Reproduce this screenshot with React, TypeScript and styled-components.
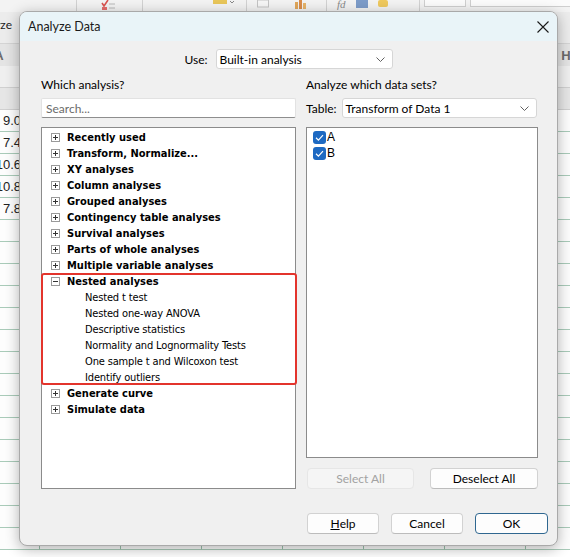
import React from "react";
import styled, { createGlobalStyle } from "styled-components";

const GlobalStyle = createGlobalStyle`
  html, body {
    margin: 0;
    padding: 0;
  }
  body {
    width: 570px;
    height: 557px;
    overflow: hidden;
    background: #ffffff;
    font-family: "Liberation Sans", Arial, sans-serif;
  }
`;

const tableColumns = ["A", "B", "C", "D", "E", "F", "G", "H"];
const columnA = ["9.0", "7.4", "10.6", "10.8", "7.8"];

const topLevel = [
  "Recently used",
  "Transform, Normalize...",
  "XY analyses",
  "Column analyses",
  "Grouped analyses",
  "Contingency table analyses",
  "Survival analyses",
  "Parts of whole analyses",
  "Multiple variable analyses",
];

const nested = [
  "Nested t test",
  "Nested one-way ANOVA",
  "Descriptive statistics",
  "Normality and Lognormality Tests",
  "One sample t and Wilcoxon test",
  "Identify outliers",
];

function ExpandIcon({ open }: { open?: boolean }) {
  return (
    <svg width="9" height="9" viewBox="0 0 9 9">
      <rect x="0.5" y="0.5" width="8" height="8" fill="#fff" stroke="#9a9a9a" />
      <line x1="2" y1="4.5" x2="7" y2="4.5" stroke="#333" />
      {!open && <line x1="4.5" y1="2" x2="4.5" y2="7" stroke="#333" />}
    </svg>
  );
}

function Chevron() {
  return (
    <svg width="9" height="5" viewBox="0 0 9 5">
      <path d="M0.5 0.5 L4.5 4.5 L8.5 0.5" fill="none" stroke="#606060" strokeWidth="1" />
    </svg>
  );
}

function CheckBox() {
  return (
    <CheckSquare>
      <svg width="13" height="13" viewBox="0 0 13 13">
        <path d="M3 6.8 L5.4 9.1 L10 4.2" fill="none" stroke="#fff" strokeWidth="1.2" />
      </svg>
    </CheckSquare>
  );
}

export default function App(): React.ReactElement {
  return (
    <Screen>
      <GlobalStyle />
      <Toolbar>
        <IconRow>
          <ToolGroup width={77} />
          <ToolGroup width={66} pad={24}>
            <svg width="14" height="11" viewBox="0 0 14 11">
              <path d="M1 3 L3 6 L7 0" fill="none" stroke="#d9534f" strokeWidth="1.6" />
              <rect x="1" y="7" width="5" height="3" fill="#e56b6b" />
              <line x1="8" y1="4" x2="14" y2="4" stroke="#b8b8b8" />
              <line x1="8" y1="8" x2="14" y2="8" stroke="#b8b8b8" />
            </svg>
          </ToolGroup>
          <ToolGroup width={104} pad={70}>
            <svg width="22" height="6" viewBox="0 0 22 6">
              <rect x="0" y="0" width="14" height="4" fill="#e8c65a" />
              <path d="M17 1 L19 3 L21 1" fill="none" stroke="#888" />
            </svg>
          </ToolGroup>
          <ToolGroup width={80} pad={10} gap={26}>
            <svg width="12" height="8" viewBox="0 0 12 8">
              <rect x="0.5" y="0" width="11" height="7" fill="#f6f6f6" stroke="#c4c4c4" />
            </svg>
            <svg width="14" height="9" viewBox="0 0 14 9">
              <rect x="0" y="2" width="3" height="7" fill="#e0a65a" />
              <rect x="4" y="0" width="3" height="9" fill="#d98c4a" />
              <rect x="8" y="3" width="3" height="6" fill="#e6b36a" />
            </svg>
          </ToolGroup>
          <ToolGroup width={93} pad={10} gap={10}>
            <ToolText>fd</ToolText>
            <svg width="12" height="8" viewBox="0 0 12 8">
              <rect x="0" y="0" width="12" height="8" fill="#7d9cc9" />
            </svg>
            <svg width="10" height="8" viewBox="0 0 10 8">
              <rect x="0" y="0" width="10" height="7" rx="2" fill="#efc95e" />
            </svg>
          </ToolGroup>
          <ToolBox width={40} />
          <ToolBox width={110} />
        </IconRow>
        <RibbonRow>
          <RibbonLabel>Analyze</RibbonLabel>
        </RibbonRow>
      </Toolbar>

      <Sheet>
        {tableColumns.map((c) => (
          <HeaderCell key={c}>{c}</HeaderCell>
        ))}
        {Array.from({ length: 22 }).map((_, r) =>
          tableColumns.map((c, ci) => (
            <Cell key={`${r}-${c}`} shade={r === 0 ? 1 : r === 1 ? 2 : 0}>
              {ci === 0 && r >= 2 && r < 2 + columnA.length ? columnA[r - 2] : ""}
            </Cell>
          ))
        )}
      </Sheet>

      <Dialog>
        <TitleBar>
          <TitleText>Analyze Data</TitleText>
          <CloseButton>
            <svg width="12" height="12" viewBox="0 0 12 12">
              <path d="M0.5 0.5 L11.5 11.5 M11.5 0.5 L0.5 11.5" stroke="#1a1a1a" strokeWidth="1.1" />
            </svg>
          </CloseButton>
        </TitleBar>

        <UseRow>
          <span>Use:</span>
          <Select width={177}>
            <span>Built-in analysis</span>
            <Chevron />
          </Select>
        </UseRow>

        <Columns>
          <Column>
            <Label>Which analysis?</Label>
            <SearchBox>Search...</SearchBox>
            <TreeBox>
              {topLevel.map((t) => (
                <TreeRow key={t}>
                  <ExpandIcon />
                  <TreeBold>{t}</TreeBold>
                </TreeRow>
              ))}
              <Highlight>
                <TreeRow>
                  <ExpandIcon open />
                  <TreeBold>Nested analyses</TreeBold>
                </TreeRow>
                {nested.map((n) => (
                  <TreeRow key={n} child>
                    <TreeText>{n}</TreeText>
                  </TreeRow>
                ))}
              </Highlight>
              <TreeRow>
                <ExpandIcon />
                <TreeBold>Generate curve</TreeBold>
              </TreeRow>
              <TreeRow>
                <ExpandIcon />
                <TreeBold>Simulate data</TreeBold>
              </TreeRow>
            </TreeBox>
          </Column>

          <Column>
            <Label>Analyze which data sets?</Label>
            <TableRow>
              <span>Table:</span>
              <Select>
                <span>Transform of Data 1</span>
                <Chevron />
              </Select>
            </TableRow>
            <DataBox>
              {["A", "B"].map((d) => (
                <DataRow key={d}>
                  <CheckBox />
                  <DataLabel>{d}</DataLabel>
                </DataRow>
              ))}
            </DataBox>
            <SelectRow>
              <Button width={107} disabled>
                Select All
              </Button>
              <Button width={108}>Deselect All</Button>
            </SelectRow>
          </Column>
        </Columns>

        <Footer>
          <Button width={72}>
            <u>H</u>elp
          </Button>
          <Button width={72}>Cancel</Button>
          <Button width={73} primary>
            OK
          </Button>
        </Footer>
      </Dialog>
    </Screen>
  );
}

const Screen = styled.div`
  position: relative;
  width: 570px;
  height: 557px;
  overflow: hidden;
  background: #ffffff;
`;

const Toolbar = styled.div`
  display: flex;
  flex-direction: column;
  height: 44px;
  background: #f3f3f3;
  border-bottom: 1px solid #d4d4d4;
  box-sizing: border-box;
`;

const IconRow = styled.div`
  display: flex;
  height: 12px;
  align-items: stretch;
`;

const ToolGroup = styled.div<{ width: number; pad?: number; gap?: number }>`
  width: ${(p) => p.width}px;
  flex: none;
  box-sizing: border-box;
  display: flex;
  align-items: flex-start;
  gap: ${(p) => p.gap ?? 0}px;
  padding-left: ${(p) => p.pad ?? 0}px;
  border-right: 1px solid #d2d2d2;
`;

const ToolText = styled.span`
  font-family: "Liberation Serif", serif;
  font-size: 11px;
  line-height: 9px;
  color: #8a8a8a;
  font-style: italic;
`;

const ToolBox = styled.div<{ width: number }>`
  width: ${(p) => p.width}px;
  flex: none;
  height: 6px;
  margin-left: 4px;
  background: #fbfbfb;
  border: 1px solid #cfcfcf;
  border-top: none;
`;

const RibbonRow = styled.div`
  flex: 1;
  display: flex;
  align-items: flex-start;
  padding-top: 5px;
  background: #ececec;
`;

const RibbonLabel = styled.div`
  width: 12px;
  display: flex;
  justify-content: flex-end;
  white-space: nowrap;
  font-family: Lato, "Liberation Sans", sans-serif;
  font-size: 12px;
  color: #222;
`;

const Sheet = styled.div`
  display: grid;
  grid-template-columns: repeat(8, 81px);
  grid-auto-rows: 22px;
  margin-left: -41px;
  font-family: "Liberation Sans", Arial, sans-serif;
  font-size: 13px;
`;

const HeaderCell = styled.div`
  height: 23px;
  box-sizing: border-box;
  display: flex;
  align-items: center;
  justify-content: center;
  background: #e4e4e4;
  border-right: 1px solid #cdcdcd;
  border-bottom: 1px solid #c6c6c6;
  color: #6a6a6a;
  font-weight: bold;
  font-size: 13px;
`;

const Cell = styled.div<{ shade: number }>`
  box-sizing: border-box;
  display: flex;
  align-items: center;
  justify-content: flex-end;
  padding-right: 18px;
  background: ${(p) => (p.shade === 1 ? "#efefef" : p.shade === 2 ? "#e6e6e6" : "#fdfdfd")};
  border-right: 1px solid #9cc1ad;
  border-bottom: 1px solid ${(p) => (p.shade ? "#d0d0d0" : "#a9cbb9")};
  color: #222;
`;

const Dialog = styled.div`
  position: absolute;
  left: 19px;
  top: 11px;
  width: 539px;
  height: 535px;
  box-sizing: border-box;
  display: flex;
  flex-direction: column;
  background: #f0f0f0;
  border: 1px solid #a9a9a9;
  border-radius: 8px;
  overflow: hidden;
  box-shadow: 0 3px 14px rgba(0, 0, 0, 0.3);
  font-family: Lato, "Liberation Sans", sans-serif;
  font-size: 12px;
  color: #000;
`;

const TitleBar = styled.div`
  height: 29px;
  flex: none;
  display: flex;
  align-items: center;
  justify-content: space-between;
  padding: 0 8px 0 8px;
  background: #e9f4f8;
`;

const TitleText = styled.span`
  font-size: 12.5px;
  color: #1a1a1a;
`;

const CloseButton = styled.div`
  width: 12px;
  height: 12px;
  display: flex;
`;

const UseRow = styled.div`
  margin-top: 8px;
  height: 20px;
  display: flex;
  align-items: center;
  justify-content: center;
  gap: 8px;
`;

const Select = styled.div<{ width?: number }>`
  height: 20px;
  box-sizing: border-box;
  ${(p) => (p.width ? `width: ${p.width}px;` : "flex: 1;")}
  display: flex;
  align-items: center;
  justify-content: space-between;
  padding: 0 7px 0 3px;
  background: #ffffff;
  border: 1px solid #d6d6d6;
  border-radius: 3px;
`;

const Columns = styled.div`
  margin-top: 9px;
  height: 411px;
  display: grid;
  grid-template-columns: 255px 232px;
  column-gap: 10px;
  padding: 0 19px 0 21px;
`;

const Column = styled.div`
  display: flex;
  flex-direction: column;
  min-height: 0;
`;

const Label = styled.div`
  height: 14px;
  line-height: 14px;
`;

const SearchBox = styled.div`
  margin-top: 6px;
  height: 20px;
  box-sizing: border-box;
  display: flex;
  align-items: center;
  padding-left: 4px;
  background: #ffffff;
  border: 1px solid #e2e2e2;
  border-bottom: 1px solid #8e8e8e;
  border-radius: 2px;
  color: #6b6b6b;
`;

const TreeBox = styled.div`
  margin-top: 9px;
  flex: 1;
  box-sizing: border-box;
  padding-top: 1px;
  background: #ffffff;
  border: 1px solid #8b8b8b;
  font-family: "DejaVu Sans Condensed", "DejaVu Sans", sans-serif;
  font-size: 11px;
`;

const TreeRow = styled.div<{ child?: boolean }>`
  height: 16px;
  display: flex;
  align-items: center;
  gap: 7px;
  padding-left: ${(p) => (p.child ? 43 : 9)}px;
`;

const TreeBold = styled.span`
  font-weight: bold;
  color: #000;
`;

const TreeText = styled.span`
  color: #000;
  letter-spacing: -0.15px;
`;

const Highlight = styled.div`
  margin: 0 -2px 0 -1px;
  padding-left: 1px;
  outline: 2px solid #e3342c;
  outline-offset: -2px;
  border-radius: 3px;
`;

const TableRow = styled.div`
  margin-top: 6px;
  height: 20px;
  display: flex;
  align-items: center;
  gap: 5px;
  margin-right: 1px;
`;

const DataBox = styled.div`
  margin-top: 9px;
  flex: 1;
  box-sizing: border-box;
  padding: 3px 6px;
  background: #ffffff;
  border: 1px solid #8b8b8b;
`;

const DataRow = styled.div`
  height: 16px;
  display: flex;
  align-items: flex-start;
  gap: 1px;
`;

const CheckSquare = styled.span`
  width: 13px;
  height: 13px;
  display: flex;
  background: #1d69c2;
  border-radius: 3px;
`;

const DataLabel = styled.span`
  font-family: "Liberation Sans", Arial, sans-serif;
  font-size: 12px;
  line-height: 13px;
`;

const SelectRow = styled.div`
  margin-top: 10px;
  display: flex;
  justify-content: space-between;
  padding-left: 1px;
`;

const Button = styled.button<{ width: number; primary?: boolean }>`
  width: ${(p) => p.width}px;
  height: 21px;
  box-sizing: border-box;
  padding: 0;
  display: flex;
  align-items: center;
  justify-content: center;
  font-family: Lato, "Liberation Sans", sans-serif;
  font-size: 12px;
  color: #000;
  background: #fdfdfd;
  border: 1px solid ${(p) => (p.primary ? "#2f6790" : "#d2d2d2")};
  border-bottom-color: ${(p) => (p.primary ? "#2f6790" : "#bcbcbc")};
  border-radius: 4px;

  &:disabled {
    color: #a2a2a2;
    background: #f5f5f5;
    border-color: #e6e6e6;
  }
`;

const Footer = styled.div`
  margin-top: 24px;
  display: flex;
  justify-content: flex-end;
  gap: 12px;
  padding-right: 9px;
`;
